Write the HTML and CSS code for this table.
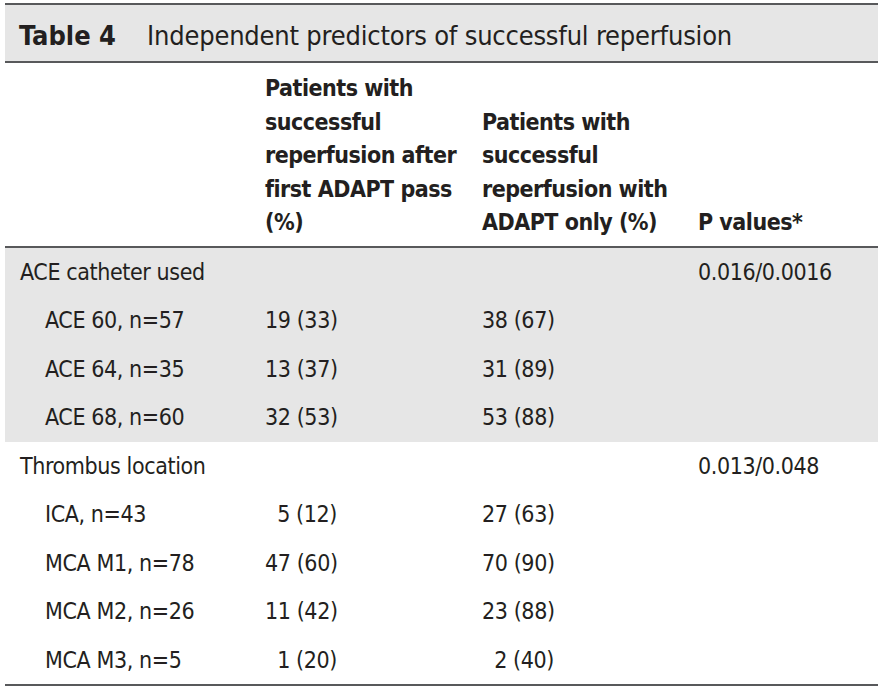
FILE: index.html
```html
<!DOCTYPE html>
<html>
<head>
<meta charset="utf-8">
<link rel="stylesheet" href="styles.css">
</head>
<body>
<div class="page">
  <div class="caption"><span class="label">Table 4</span><span class="title">Independent predictors of successful reperfusion</span></div>
  <table class="data">
    <colgroup>
      <col class="c1"><col class="c2"><col class="c3"><col class="c4">
    </colgroup>
    <thead>
      <tr>
        <th></th>
        <th>Patients with<br>successful<br>reperfusion after<br>first ADAPT pass<br>(%)</th>
        <th>Patients with<br>successful<br>reperfusion with<br>ADAPT only (%)</th>
        <th>P values*</th>
      </tr>
    </thead>
    <tbody class="shaded">
      <tr><td>ACE catheter used</td><td></td><td></td><td>0.016/0.0016</td></tr>
      <tr><td class="sub">ACE 60, n=57</td><td><span class="num">19 (33)</span></td><td><span class="num">38 (67)</span></td><td></td></tr>
      <tr><td class="sub">ACE 64, n=35</td><td><span class="num">13 (37)</span></td><td><span class="num">31 (89)</span></td><td></td></tr>
      <tr><td class="sub">ACE 68, n=60</td><td><span class="num">32 (53)</span></td><td><span class="num">53 (88)</span></td><td></td></tr>
    </tbody>
    <tbody>
      <tr><td>Thrombus location</td><td></td><td></td><td>0.013/0.048</td></tr>
      <tr><td class="sub">ICA, n=43</td><td><span class="num">5 (12)</span></td><td><span class="num">27 (63)</span></td><td></td></tr>
      <tr><td class="sub">MCA M1, n=78</td><td><span class="num">47 (60)</span></td><td><span class="num">70 (90)</span></td><td></td></tr>
      <tr><td class="sub">MCA M2, n=26</td><td><span class="num">11 (42)</span></td><td><span class="num">23 (88)</span></td><td></td></tr>
      <tr><td class="sub">MCA M3, n=5</td><td><span class="num">1 (20)</span></td><td><span class="num">2 (40)</span></td><td></td></tr>
    </tbody>
  </table>
</div>
</body>
</html>
```

FILE: styles.css
```css
html, body {
  margin: 0;
  padding: 0;
  background: #ffffff;
}
body {
  font-family: "DejaVu Sans Condensed", "Liberation Sans Narrow", "DejaVu Sans", sans-serif;
  font-stretch: condensed;
  color: #231f20;
}
.page {
  width: 873px;
  margin: 3px 0 0 5px;
}
.caption {
  background: #e6e6e6;
  border-top: 2px solid #58595b;
  border-bottom: 2px solid #58595b;
  height: 56px;
  display: flex;
  align-items: center;
  padding: 5px 0 0 14px;
  box-sizing: border-box;
  height: 60px;
  font-size: 27px;
  letter-spacing: -0.2px;
}
.caption .label {
  font-weight: bold;
  margin-right: 31px;
  letter-spacing: 0;
}
.data {
  width: 873px;
  border-collapse: collapse;
  table-layout: fixed;
  font-size: 23px;
  border-bottom: 2px solid #58595b;
}
col.c1 { width: 245px; }
col.c2 { width: 217px; }
col.c3 { width: 216px; }
col.c4 { width: 195px; }
.data th {
  font-weight: bold;
  text-align: left;
  vertical-align: bottom;
  line-height: 33.5px;
  letter-spacing: -0.5px;
  padding: 9px 0 6px 15px;
  border-bottom: 2px solid #58595b;
}
.data td {
  height: 48.5px;
  padding: 0 0 0 15px;
  vertical-align: middle;
  white-space: nowrap;
  letter-spacing: -0.4px;
}
.data td.sub {
  padding-left: 40px;
}
.shaded td {
  background: #e6e6e6;
}
.num {
  display: inline-block;
  width: 72px;
  text-align: right;
}
```
